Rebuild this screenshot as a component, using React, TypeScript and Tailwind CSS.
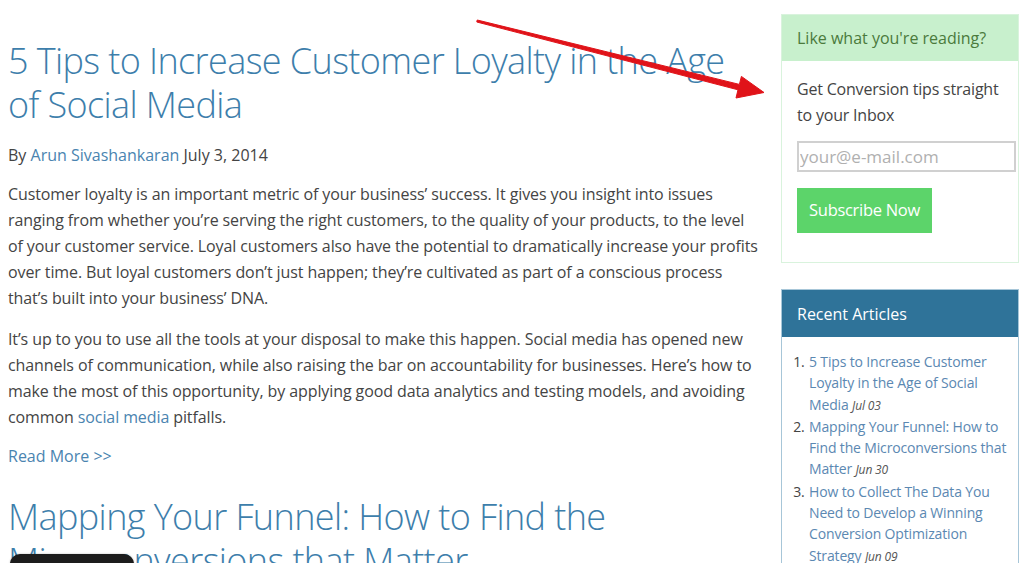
import React from "react";

const recent = [
  { title: "5 Tips to Increase Customer Loyalty in the Age of Social Media", date: "Jul 03" },
  { title: "Mapping Your Funnel: How to Find the Microconversions that Matter", date: "Jun 30" },
  { title: "How to Collect The Data You Need to Develop a Winning Conversion Optimization Strategy", date: "Jun 09" },
];

function Arrow() {
  return (
    <svg className="absolute left-0 top-0 pointer-events-none" width="1024" height="563" viewBox="0 0 1024 563">
      <polygon
        points="477.2,20 739.4,84.4 741.4,76.4 764,92.5 736,98 738,89.8 476.8,22"
        fill="#e01319"
        stroke="#e01319"
        strokeWidth="1"
        strokeLinejoin="round"
      />
    </svg>
  );
}

function SubscribeBox() {
  return (
    <div className="border border-[#d9f3dd] bg-white">
      <div className="h-[46px] bg-[#c8f0cd] px-[15px] flex items-center text-[16px] font-medium text-[#4b7a3c]">
        Like what you're reading?
      </div>
      <div className="pl-[15px] pr-[3px] pt-[15px] pb-[29px]">
        <p className="text-[16px] leading-[26px] text-[#444] tracking-[-0.2px]">Get Conversion tips straight to your Inbox</p>
        <input
          type="text"
          placeholder="your@e-mail.com"
          className="mt-[13px] w-[219px] h-[31px] border-2 border-[#d0d0d0] px-[1px] text-[17px] placeholder:text-[#b0b0b0] outline-none"
        />
        <button className="mt-[16px] block w-[135px] h-[45px] bg-[#5cd46a] text-white text-[16.5px] font-medium tracking-[-0.3px]">
          Subscribe Now
        </button>
      </div>
    </div>
  );
}

function RecentBox() {
  return (
    <div className="border border-[#a7c6d8] bg-white">
      <div className="h-[47px] bg-[#2f7399] px-[15px] flex items-center text-[16px] text-white">
        Recent Articles
      </div>
      <ol className="list-decimal pl-[26px] pr-[6px] pt-[14px] text-[14px] leading-[21.3px] text-[#444] tracking-[-0.15px] marker:text-[#444]">
        {recent.map((r) => (
          <li key={r.date} className="pl-[1px]">
            <a className="text-[#5b88b2]">{r.title}</a>{" "}
            <span className="italic text-[12px] text-[#555]">{r.date}</span>
          </li>
        ))}
      </ol>
    </div>
  );
}

export default function App() {
  return (
    <div className="relative w-[1024px] h-[563px] overflow-hidden bg-white font-['Open_Sans',sans-serif]">
      <div className="flex">
        <main className="w-[762px] pl-[8px] pr-[2px] pt-[39px] shrink-0">
          <h1 className="text-[36px] leading-[44px] font-light text-[#3d7eab] tracking-[-0.6px]">
            5 Tips to Increase Customer Loyalty in the Age of Social Media
          </h1>
          <p className="mt-[15px] text-[16px] leading-[26px] text-[#444]">
            By <a className="text-[#4a84b0]">Arun Sivashankaran</a> July 3, 2014
          </p>
          <p className="mt-[13px] text-[16px] leading-[26px] text-[#444] tracking-[-0.1px]">
            Customer loyalty is an important metric of your business’ success. It gives you insight into issues ranging from whether you’re serving the right customers, to the quality of your products, to the level of your customer service. Loyal customers also have the potential to dramatically increase your profits over time. But loyal customers don’t just happen; they’re cultivated as part of a conscious process that’s built into your business’ DNA.
          </p>
          <p className="mt-[15px] text-[16px] leading-[26px] text-[#444] tracking-[-0.1px]">
            It’s up to you to use all the tools at your disposal to make this happen. Social media has opened new channels of communication, while also raising the bar on accountability for businesses. Here’s how to make the most of this opportunity, by applying good data analytics and testing models, and avoiding common <a className="text-[#4a84b0]">social media</a> pitfalls.
          </p>
          <p className="mt-[13px] text-[16px] leading-[26px] text-[#4a84b0]">Read More &gt;&gt;</p>
          <h1 className="mt-[26px] text-[36px] leading-[44px] font-light text-[#3d7eab] tracking-[-0.6px]">
            Mapping Your Funnel: How to Find the Microconversions that Matter
          </h1>
        </main>
        <aside className="ml-[19px] mt-[14px] w-[238px] flex flex-col gap-[26px]">
          <SubscribeBox />
          <RecentBox />
        </aside>
      </div>
      <Arrow />
      <div className="absolute left-[10px] top-[554px] w-[124px] h-[30px] rounded-[10px] bg-[#1c1c1c] shadow-[0_0_2px_rgba(0,0,0,0.3)]" />
    </div>
  );
}
